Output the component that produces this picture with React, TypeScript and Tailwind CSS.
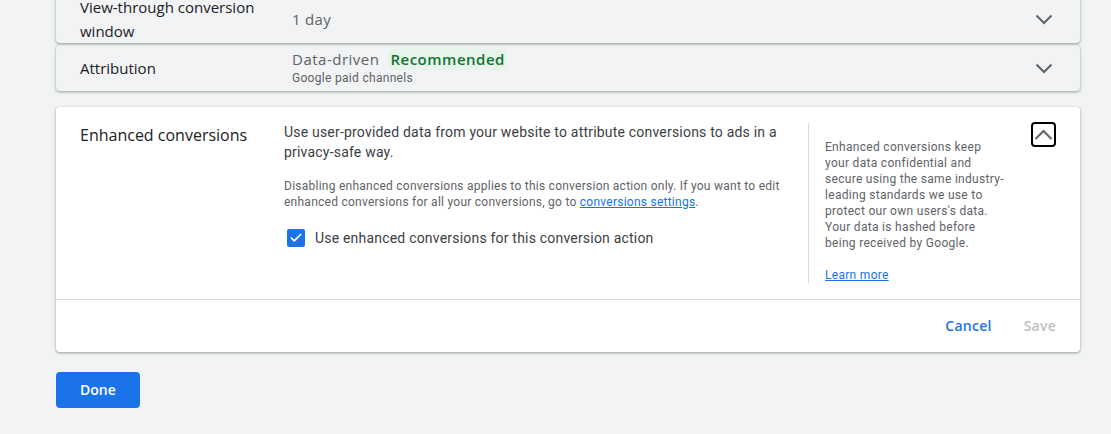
import { Check } from "lucide-react";

const cardShadow =
  "shadow-[0_1px_2px_0_rgba(60,64,67,0.3),0_1px_3px_1px_rgba(60,64,67,0.15)]";

const ChevronDown = () => (
  <svg viewBox="0 0 24 24" className="h-6 w-6" fill="none">
    <path d="M4.5 8.5l7.5 7.5 7.5-7.5" stroke="#5f6368" strokeWidth="2" />
  </svg>
);

const ChevronUp = () => (
  <svg viewBox="0 0 21 21" className="h-[21px] w-[21px]" fill="none">
    <path d="M2.5 15l8-8 8 8" stroke="#5f6368" strokeWidth="2" />
  </svg>
);

const App = () => {
  return (
    <div className="min-h-screen overflow-hidden bg-[#f1f3f4] font-['Roboto',sans-serif]">
      <div className="ml-14 w-[1024px]">
        {/* View-through conversion window (scrolled partly off the top) */}
        <div
          className={`-mt-[5px] flex h-12 items-center rounded-b px-6 ${cardShadow}`}
        >
          <div className="w-[212px] font-['Open_Sans',sans-serif] text-[15px] font-medium leading-6 text-[#202124]">
            View-through conversion
            <br />
            window
          </div>
          <div className="flex-1 font-['Open_Sans',sans-serif] text-[15px] tracking-[0.3px] text-[#5f6368]">
            1 day
          </div>
          <ChevronDown />
        </div>

        {/* Attribution */}
        <div
          className={`mt-[2px] flex h-[46px] items-center rounded px-6 ${cardShadow}`}
        >
          <div className="w-[212px] font-['Open_Sans',sans-serif] text-[15px] font-medium text-[#202124]">
            Attribution
          </div>
          <div className="-mt-px flex-1">
            <div className="flex items-center gap-[9px] font-['Open_Sans',sans-serif] text-[15px] leading-[21px] tracking-[0.5px]">
              <span className="text-[#5f6368]">Data-driven</span>
              <span className="rounded-sm bg-[#e6f4ea] px-[2px] font-semibold text-[#137333]">
                Recommended
              </span>
            </div>
            <div className="text-xs leading-4 tracking-[0.3px] text-[#5f6368]">
              Google paid channels
            </div>
          </div>
          <ChevronDown />
        </div>

        {/* Enhanced conversions (expanded) */}
        <div className={`mt-4 rounded bg-white ${cardShadow}`}>
          <div className="flex pb-4 pl-6 pr-6 pt-4">
            <div className="w-[204px] font-['Open_Sans',sans-serif] text-base font-medium leading-6 text-[#202124]">
              Enhanced conversions
            </div>
            <div className="-mt-px w-[524px] pr-6">
              <p className="text-sm leading-5 tracking-[0.2px] text-[#3c4043]">
                Use user-provided data from your website to attribute
                conversions to ads in a privacy-safe way.
              </p>
              <p className="mt-4 text-xs leading-4 tracking-[0.25px] text-[#5f6368]">
                Disabling enhanced conversions applies to this conversion action
                only. If you want to edit enhanced conversions for all your
                conversions, go to{" "}
                <a href="#" className="text-[#1a73e8] underline">
                  conversions settings
                </a>
                .
              </p>
              <label className="mt-[18px] flex items-center">
                <span className="ml-[3px] flex h-[18px] w-[18px] items-center justify-center rounded-[2px] bg-[#1a73e8]">
                  <Check className="h-[14px] w-[14px] text-white" strokeWidth={3} />
                </span>
                <span className="ml-[10px] text-sm tracking-[0.2px] text-[#3c4043]">
                  Use enhanced conversions for this conversion action
                </span>
              </label>
            </div>
            <div className="border-l border-[#dadce0] pl-4 pt-4">
              <p className="w-[180px] text-xs leading-4 tracking-[0.3px] text-[#5f6368]">
                Enhanced conversions keep your data confidential and secure
                using the same industry-leading standards we use to protect our
                own users's data. Your data is hashed before being received by
                Google.
              </p>
              <a
                href="#"
                className="mt-4 block text-xs leading-4 tracking-[0.3px] text-[#1a73e8] underline"
              >
                Learn more
              </a>
            </div>
            <div className="flex flex-1 justify-end">
              <button className="-mt-px flex h-[25px] w-[25px] items-center justify-center rounded-[4px] border-2 border-black">
                <ChevronUp />
              </button>
            </div>
          </div>
          <div className="flex h-[53px] items-center justify-end gap-4 border-t border-[#dadce0] pr-4">
            <button className="px-2 font-['Open_Sans',sans-serif] text-sm font-semibold tracking-[0.25px] text-[#1a73e8]">
              Cancel
            </button>
            <button className="px-2 font-['Open_Sans',sans-serif] text-sm font-semibold tracking-[0.25px] text-[#bdc1c6]">
              Save
            </button>
          </div>
        </div>

        <button className="mt-5 h-9 rounded bg-[#1a73e8] px-6 font-['Open_Sans',sans-serif] text-sm font-semibold text-white">
          Done
        </button>
      </div>
    </div>
  );
};

export default App;
